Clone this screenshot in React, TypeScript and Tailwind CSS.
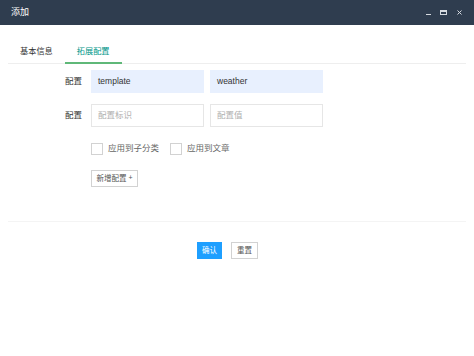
export default function App() {
  return (
    <div className="w-[474px] h-[356px] bg-white overflow-hidden font-['Liberation_Sans','Noto_Sans_CJK_SC',sans-serif] text-[8.5px] text-[#333]">
      {/* title bar */}
      <div className="h-[25px] bg-[#2f3d4f] flex items-center pl-[11px] pr-[12px] text-white text-[9px]">
        <span>添加</span>
        <div className="ml-auto flex items-center gap-[9px]">
          <span className="block w-[5px] h-[1px] bg-[#d6dbe0] mt-[4px]" />
          <span className="block w-[7px] h-[5px] border border-[#d6dbe0] border-t-[2px]" />
          <svg width="5" height="5" viewBox="0 0 5 5" className="ml-[1px]">
            <path d="M0.5 0.5 L4.5 4.5 M4.5 0.5 L0.5 4.5" stroke="#d6dbe0" strokeWidth="1" />
          </svg>
        </div>
      </div>

      {/* tabs */}
      <div className="mx-[8px] mt-[15px] border-b border-[#eee] flex h-[24px] text-[8.2px]">
        <div className="px-[12px] flex items-center text-[#333] pt-[1px]">基本信息</div>
        <div className="px-[12px] flex items-center text-[#009688] border-b-[2px] border-[#5fb878] -mb-[1px] pt-[2px]">拓展配置</div>
      </div>

      {/* form */}
      <div className="pt-[6px]">
        <div className="flex items-center h-[23px]">
          <label className="w-[83px] pr-[1px] text-right">配置</label>
          <div className="ml-[8px] flex gap-[6px]">
            <div className="w-[113px] h-[23px] bg-[#e8f0fe] flex items-center pl-[7px] text-[#333]">template</div>
            <div className="w-[113px] h-[23px] bg-[#e8f0fe] flex items-center pl-[7px] text-[#333]">weather</div>
          </div>
        </div>
        <div className="flex items-center h-[23px] mt-[11px]">
          <label className="w-[83px] pr-[1px] text-right">配置</label>
          <div className="ml-[8px] flex gap-[6px]">
            <div className="w-[113px] h-[23px] border border-[#e6e6e6] flex items-center pl-[6px] text-[#b0b0b0]">配置标识</div>
            <div className="w-[113px] h-[23px] border border-[#e6e6e6] flex items-center pl-[6px] text-[#b0b0b0]">配置值</div>
          </div>
        </div>

        <div className="ml-[91px] mt-[15px] flex items-center h-[13px] text-[#666]">
          <span className="w-[12px] h-[12px] border border-[#d2d2d2] bg-white" />
          <span className="ml-[5px]">应用到子分类</span>
          <span className="ml-[11px] w-[12px] h-[12px] border border-[#d2d2d2] bg-white" />
          <span className="ml-[5px]">应用到文章</span>
        </div>

        <div className="ml-[91px] mt-[15px]">
          <button className="h-[17px] w-[47px] border border-[#d2d2d2] bg-white text-[#555] text-[7.5px] flex items-center justify-center gap-[2px]">
            新增配置 <span className="text-[7px]">+</span>
          </button>
        </div>
      </div>

      <div className="mx-[8px] mt-[34px] border-t border-[#f4f4f4]" />

      <div className="mt-[20px] ml-[197px] flex gap-[9px]">
        <button className="h-[17px] w-[25px] bg-[#1e9fff] text-white text-[7.5px]">确认</button>
        <button className="h-[17px] w-[27px] border border-[#d2d2d2] bg-white text-[#555] text-[7.5px]">重置</button>
      </div>
    </div>
  )
}
